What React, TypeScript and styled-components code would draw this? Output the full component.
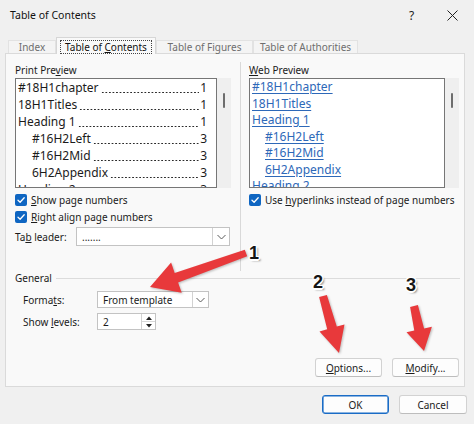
import React from "react";
import styled, { createGlobalStyle } from "styled-components";

const Global = createGlobalStyle`
  *, *::before, *::after { box-sizing: border-box; }
  html, body { margin: 0; padding: 0; background: #f0f0f0; }
  body { font-family: "Noto Sans", "Segoe UI", sans-serif; }
`;

const Dialog = styled.div`
  position: relative;
  width: 474px;
  height: 424px;
  overflow: hidden;
  background: #f0f0f0;
  font-family: "Noto Sans", sans-serif;
  font-size: 10px;
  color: #1b1b1b;
  display: flex;
  flex-direction: column;
`;

const TitleBar = styled.div`
  height: 30px;
  display: flex;
  align-items: center;
  padding-left: 10px;
`;

const TitleText = styled.div`
  flex: 1;
  font-size: 10.5px;
  color: #111;
`;

const TitleButton = styled.div`
  width: 41px;
  height: 30px;
  display: flex;
  align-items: center;
  justify-content: center;
  font-size: 12px;
  color: #222;
  &:last-child { margin-right: 1px; }
`;

const TabRow = styled.div`
  height: 23px;
  display: flex;
  align-items: flex-end;
  padding-left: 8px;
  position: relative;
  z-index: 1;
`;

const Tab = styled.div<{ $w: number; $active?: boolean }>`
  width: ${(p) => p.$w}px;
  height: ${(p) => (p.$active ? 17 : 13)}px;
  margin-bottom: ${(p) => (p.$active ? -1 : 0)}px;
  display: flex;
  align-items: center;
  justify-content: center;
  background: ${(p) => (p.$active ? "#f9f9f9" : "#f4f4f4")};
  border: 1px solid ${(p) => (p.$active ? "#d6d6d6" : "#e2e2e2")};
  border-bottom: none;
  color: ${(p) => (p.$active ? "#111" : "#6e6e6e")};
  white-space: nowrap;
`;

const FocusRect = styled.div`
  border: 1px dotted #444;
  height: 14px;
  padding: 0 4px;
  display: flex;
  align-items: center;
  margin-top: 1px;
`;

const Panel = styled.div`
  margin-left: 5px;
  width: 460px;
  height: 334px;
  border: 1px solid #dadada;
  background: #f9f9f9;
  display: flex;
  flex-direction: column;
`;

const TopGrid = styled.div`
  display: grid;
  grid-template-columns: 234px 1fr;
  height: 217px;
`;

const LeftCol = styled.div`
  padding: 9px 0 0 9px;
`;

const RightCol = styled.div`
  margin-top: 8px;
  border-left: 1px solid #d9d9d9;
  padding: 1px 0 0 8px;
`;

const GroupLabel = styled.div`
  height: 15px;
  line-height: 14px;
  color: #1b1b1b;
`;

const Key = styled.span`
  text-decoration: underline;
  text-underline-offset: 1px;
`;

const PreviewWrap = styled.div`
  display: flex;
  height: 110px;
`;

const PreviewBox = styled.div<{ $w: number }>`
  width: ${(p) => p.$w}px;
  height: 110px;
  background: #fff;
  border: 1px solid #767676;
  padding-left: 2px;
  overflow: hidden;
  font-size: 12px;
`;

const PrintRow = styled.div<{ $indent?: boolean }>`
  height: 17px;
  line-height: 17px;
  display: flex;
  padding-left: ${(p) => (p.$indent ? 14 : 0)}px;
  padding-right: 9px;
  white-space: nowrap;
  color: #1b1b1b;
`;

const Leader = styled.span`
  flex: 1;
  min-width: 0;
  margin: 0 1px 0 2px;
  background-image: radial-gradient(circle, #2a2a2a 0.75px, transparent 1px);
  background-size: 3.55px 3px;
  background-repeat: repeat-x;
  background-position: 0 11.6px;
`;

const RowText = styled.span`
  flex: none;
`;

const WebRow = styled.div<{ $indent?: boolean }>`
  height: 16.5px;
  line-height: 16.5px;
  padding-left: ${(p) => (p.$indent ? 13 : 0)}px;
  white-space: nowrap;
`;

const WebLink = styled.span`
  color: #2d68b8;
  text-decoration: underline;
  text-underline-offset: 1.5px;
`;

const ScrollTrack = styled.div<{ $w: number }>`
  width: ${(p) => p.$w}px;
  height: 110px;
  background: #efefef;
  padding-top: 15px;
  display: flex;
  justify-content: center;
`;

const Thumb = styled.div`
  width: 2px;
  height: 15px;
  background: #6d6d6d;
  border-radius: 1px;
`;

const CheckRow = styled.div<{ $first?: boolean }>`
  height: 17px;
  margin-top: ${(p) => (p.$first ? 3 : 0)}px;
  display: flex;
  align-items: center;
  gap: 4px;
`;

const Box = styled.span`
  width: 12px;
  height: 12px;
  border-radius: 2px;
  background: #0f66c2;
  display: flex;
  align-items: center;
  justify-content: center;
`;

const LeaderRow = styled.div`
  margin-top: 2px;
  height: 19px;
  display: flex;
  align-items: center;
`;

const FieldLabel = styled.div<{ $w: number }>`
  width: ${(p) => p.$w}px;
`;

const Select = styled.div<{ $w: number; $h: number }>`
  width: ${(p) => p.$w}px;
  height: ${(p) => p.$h}px;
  background: #fff;
  border: 1px solid #c3c3c3;
  display: flex;
  align-items: stretch;
`;

const SelectValue = styled.div`
  flex: 1;
  padding-left: 5px;
  display: flex;
  align-items: center;
  color: #1b1b1b;
`;

const ChevronCell = styled.div<{ $w: number }>`
  width: ${(p) => p.$w}px;
  border-left: 1px solid #d2d2d2;
  display: flex;
  align-items: center;
  justify-content: center;
`;

const SpinCell = styled.div`
  width: 14px;
  border-left: 1px solid #d2d2d2;
  display: flex;
  flex-direction: column;
`;

const SpinHalf = styled.div`
  flex: 1;
  display: flex;
  align-items: center;
  justify-content: center;
  &:first-child { border-bottom: 1px solid #d8d8d8; }
`;

const GeneralHeader = styled.div`
  height: 14px;
  display: flex;
  align-items: center;
  padding: 0 4px 0 9px;
`;

const Rule = styled.div`
  flex: 1;
  height: 1px;
  background: #dcdcdc;
  margin-left: 4px;
`;

const FormRow = styled.div<{ $mt: number }>`
  margin-top: ${(p) => p.$mt}px;
  height: 17px;
  padding-left: 17px;
  display: flex;
  align-items: center;
`;

const ButtonRow = styled.div`
  margin-top: 28px;
  display: flex;
  justify-content: flex-end;
  gap: 10px;
  padding-right: 5px;
`;

const Button = styled.div<{ $w: number; $primary?: boolean }>`
  width: ${(p) => p.$w}px;
  height: 19px;
  display: flex;
  align-items: center;
  justify-content: center;
  background: #fdfdfd;
  border: 1px solid ${(p) => (p.$primary ? "#1a6cc6" : "#d2d2d2")};
  border-bottom-color: ${(p) => (p.$primary ? "#1a6cc6" : "#bdbdbd")};
  box-shadow: ${(p) => (p.$primary ? "inset 0 0 0 0.6px #1a6cc6" : "none")};
  border-radius: 3px;
  color: #1b1b1b;
`;

const Footer = styled.div`
  display: flex;
  justify-content: flex-end;
  gap: 10px;
  padding: 8px 7px 0 0;
`;

const Overlay = styled.svg`
  position: absolute;
  left: 0;
  top: 0;
  width: 474px;
  height: 424px;
  pointer-events: none;
  filter: drop-shadow(1px 1px 1px rgba(0, 0, 0, 0.25));
`;

const Badge = styled.span<{ $x: number; $y: number }>`
  position: absolute;
  left: ${(p) => p.$x}px;
  top: ${(p) => p.$y}px;
  font-family: "Liberation Sans", Arial, sans-serif;
  font-weight: bold;
  font-size: 18px;
  line-height: 18px;
  color: #151515;
  text-shadow: -1.5px 0 #fff, 1.5px 0 #fff, 0 -1.5px #fff, 0 1.5px #fff,
    -1px -1px #fff, 1px -1px #fff, -1px 1px #fff, 1px 1px #fff,
    2px 2px 2px rgba(0, 0, 0, 0.45);
`;

const Check = () => (
  <svg width="10" height="10" viewBox="0 0 10 10">
    <path d="M2 5.2 L4.1 7.2 L8.2 2.8" fill="none" stroke="#fff" strokeWidth="1.3" strokeLinecap="round" strokeLinejoin="round" />
  </svg>
);

const Chevron = () => (
  <svg width="9" height="6" viewBox="0 0 9 6">
    <polyline points="0.5,1 4.5,5 8.5,1" fill="none" stroke="#5a5a5a" strokeWidth="1" />
  </svg>
);

const Tri = ({ up }: { up?: boolean }) => (
  <svg width="6" height="4" viewBox="0 0 6 4">
    <polygon points={up ? "0,4 3,0.5 6,4" : "0,0 3,3.5 6,0"} fill="#222" />
  </svg>
);

function arrow(
  x1: number, y1: number, x2: number, y2: number,
  st: number, sh: number, hl: number, hw: number
) {
  const dx = x2 - x1, dy = y2 - y1;
  const len = Math.hypot(dx, dy);
  const ux = dx / len, uy = dy / len;
  const nx = -uy, ny = ux;
  const bx = x2 - ux * hl, by = y2 - uy * hl;
  const pts: [number, number][] = [
    [x1 + (nx * st) / 2, y1 + (ny * st) / 2],
    [bx + (nx * sh) / 2, by + (ny * sh) / 2],
    [bx + (nx * hw) / 2, by + (ny * hw) / 2],
    [x2, y2],
    [bx - (nx * hw) / 2, by - (ny * hw) / 2],
    [bx - (nx * sh) / 2, by - (ny * sh) / 2],
    [x1 - (nx * st) / 2, y1 - (ny * st) / 2],
  ];
  return pts.map((p) => `${p[0].toFixed(1)},${p[1].toFixed(1)}`).join(" ");
}

const printRows = [
  { t: "#18H1chapter", n: "1" },
  { t: "18H1Titles", n: "1" },
  { t: "Heading 1", n: "1" },
  { t: "#16H2Left", n: "3", i: true },
  { t: "#16H2Mid", n: "3", i: true },
  { t: "6H2Appendix", n: "3", i: true },
  { t: "Heading 2", n: "3" },
];

const webRows = [
  { t: "#18H1chapter" },
  { t: "18H1Titles" },
  { t: "Heading 1" },
  { t: "#16H2Left", i: true },
  { t: "#16H2Mid", i: true },
  { t: "6H2Appendix", i: true },
  { t: "Heading 2" },
];

export default function App() {
  return (
    <>
      <Global />
      <Dialog>
        <TitleBar>
          <TitleText>Table of Contents</TitleText>
          <TitleButton>?</TitleButton>
          <TitleButton>
            <svg width="11" height="11" viewBox="0 0 11 11">
              <path d="M0.5 0.5 L10.5 10.5 M10.5 0.5 L0.5 10.5" stroke="#222" strokeWidth="1" />
            </svg>
          </TitleButton>
        </TitleBar>

        <TabRow>
          <Tab $w={48}>Index</Tab>
          <Tab $w={100} $active>
            <FocusRect>
              Table of&nbsp;<Key>C</Key>ontents
            </FocusRect>
          </Tab>
          <Tab $w={97}>Table of Figures</Tab>
          <Tab $w={105}>Table of Authorities</Tab>
        </TabRow>

        <Panel>
          <TopGrid>
            <LeftCol>
              <GroupLabel>
                Print Pre<Key>v</Key>iew
              </GroupLabel>
              <PreviewWrap>
                <PreviewBox $w={202}>
                  {printRows.map((r) => (
                    <PrintRow key={r.t} $indent={r.i}>
                      <RowText>{r.t}</RowText>
                      <Leader />
                      <RowText>{r.n}</RowText>
                    </PrintRow>
                  ))}
                </PreviewBox>
                <ScrollTrack $w={14}>
                  <Thumb />
                </ScrollTrack>
              </PreviewWrap>
              <CheckRow $first>
                <Box><Check /></Box>
                <span><Key>S</Key>how page numbers</span>
              </CheckRow>
              <CheckRow>
                <Box><Check /></Box>
                <span><Key>R</Key>ight align page numbers</span>
              </CheckRow>
              <LeaderRow>
                <FieldLabel $w={61}>
                  Ta<Key>b</Key> leader:
                </FieldLabel>
                <Select $w={154} $h={19}>
                  <SelectValue>.......</SelectValue>
                  <ChevronCell $w={17}>
                    <Chevron />
                  </ChevronCell>
                </Select>
              </LeaderRow>
            </LeftCol>

            <RightCol>
              <GroupLabel>
                <Key>W</Key>eb Preview
              </GroupLabel>
              <PreviewWrap>
                <PreviewBox $w={196}>
                  {webRows.map((r) => (
                    <WebRow key={r.t} $indent={r.i}>
                      <WebLink>{r.t}</WebLink>
                    </WebRow>
                  ))}
                </PreviewBox>
                <ScrollTrack $w={14}>
                  <Thumb />
                </ScrollTrack>
              </PreviewWrap>
              <CheckRow $first>
                <Box><Check /></Box>
                <span>
                  Use <Key>h</Key>yperlinks instead of page numbers
                </span>
              </CheckRow>
            </RightCol>
          </TopGrid>

          <GeneralHeader>
            <span>General</span>
            <Rule />
          </GeneralHeader>

          <FormRow $mt={6}>
            <FieldLabel $w={74}>
              Forma<Key>t</Key>s:
            </FieldLabel>
            <Select $w={112} $h={17}>
              <SelectValue>From template</SelectValue>
              <ChevronCell $w={16}>
                <Chevron />
              </ChevronCell>
            </Select>
          </FormRow>

          <FormRow $mt={5}>
            <FieldLabel $w={74}>
              Show <Key>l</Key>evels:
            </FieldLabel>
            <Select $w={59} $h={17}>
              <SelectValue>2</SelectValue>
              <SpinCell>
                <SpinHalf><Tri up /></SpinHalf>
                <SpinHalf><Tri /></SpinHalf>
              </SpinCell>
            </Select>
          </FormRow>

          <ButtonRow>
            <Button $w={67}>
              <span><Key>O</Key>ptions...</span>
            </Button>
            <Button $w={67}>
              <span><Key>M</Key>odify...</span>
            </Button>
          </ButtonRow>
        </Panel>

        <Footer>
          <Button $w={67} $primary>OK</Button>
          <Button $w={68}>Cancel</Button>
        </Footer>

        <Overlay viewBox="0 0 474 424">
          <polygon points={arrow(246, 253, 150, 287, 7, 10, 28, 32)} fill="#e8393b" />
          <polygon points={arrow(323, 296, 339, 353, 8, 10, 26, 26)} fill="#e8393b" />
          <polygon points={arrow(414, 306, 424, 351, 8, 10, 22, 26)} fill="#e8393b" />
        </Overlay>
        <Badge $x={249} $y={244}>1</Badge>
        <Badge $x={313} $y={273}>2</Badge>
        <Badge $x={406} $y={276}>3</Badge>
      </Dialog>
    </>
  );
}
